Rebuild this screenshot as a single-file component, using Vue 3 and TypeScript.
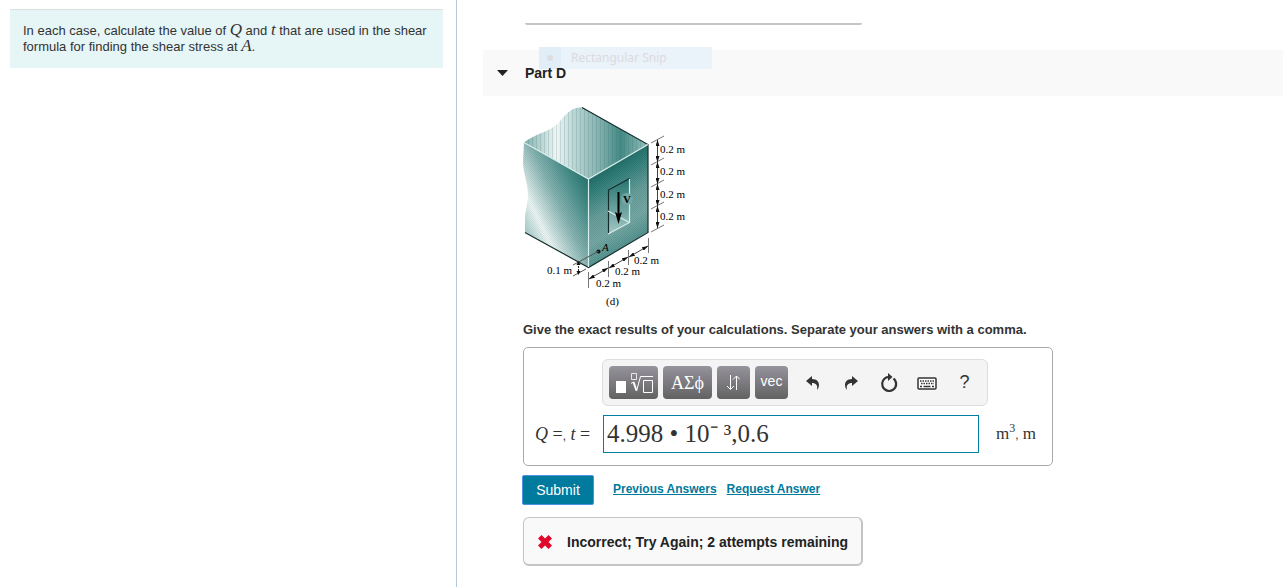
<script setup lang="ts">
import { ref } from 'vue'

const answer = ref('4.998 • 10⁻ ³,0.6')
const expanded = ref(true)
const heights = [153, 175, 198, 220]
const ticks = [143, 165, 187, 209, 232]
</script>

<template>
  <div class="page">
    <aside class="side">
      <p class="statement">
        In each case, calculate the value of <i>Q</i> and <i>t</i> that are used in the shear formula for finding the shear stress at <i>A</i>.
      </p>
    </aside>
    <main class="main">
      <div class="previous"></div>
      <header class="part-head">
        <button class="part-toggle" type="button" :aria-expanded="expanded" @click="expanded = !expanded">
          <svg width="11" height="6" viewBox="0 0 11 6" aria-hidden="true"><path d="M0 0h11L5.500 6z" fill="#222" /></svg>
          <span>Part D</span>
        </button>
        <div class="snip"><span class="snip-mark"><span class="dot"></span></span><span>Rectangular Snip</span></div>
      </header>

      <section v-show="expanded" class="body">
        <svg class="figure" width="166" height="206" viewBox="523 106 166 206" role="img" aria-label="Rectangular member with opening, figure d">
          <defs>
            <linearGradient id="top" gradientUnits="userSpaceOnUse" x1="524" y1="140" x2="648" y2="140">
              <stop offset="0" stop-color="#7fadab" />
              <stop offset=".12" stop-color="#b2cfcd" />
              <stop offset=".26" stop-color="#eff5f5" />
              <stop offset=".4" stop-color="#bed7d6" />
              <stop offset=".6" stop-color="#86b2b0" />
              <stop offset=".78" stop-color="#448985" />
              <stop offset="1" stop-color="#97c0be" />
            </linearGradient>
            <linearGradient id="left" gradientUnits="userSpaceOnUse" x1="519" y1="219" x2="589" y2="185">
              <stop offset="0" stop-color="#a9cbc9" />
              <stop offset=".22" stop-color="#eef6f5" />
              <stop offset=".34" stop-color="#c4dbda" />
              <stop offset=".54" stop-color="#86b2b0" />
              <stop offset=".8" stop-color="#4c8f8b" />
              <stop offset="1" stop-color="#2b7570" />
            </linearGradient>
            <linearGradient id="right" gradientUnits="userSpaceOnUse" x1="590" y1="181" x2="635" y2="252">
              <stop offset="0" stop-color="#25706b" />
              <stop offset=".12" stop-color="#34807b" />
              <stop offset=".4" stop-color="#6a9f9c" />
              <stop offset=".65" stop-color="#79aaa7" />
              <stop offset="1" stop-color="#468985" />
            </linearGradient>
            <linearGradient id="hole" x1="0" y1="0" x2="0" y2="1">
              <stop offset="0" stop-color="#26736e" />
              <stop offset="1" stop-color="#a3c8c6" />
            </linearGradient>
            <pattern id="stripes" width="4" height="4" patternUnits="userSpaceOnUse">
              <path d="M.5 0v4" stroke="#2d6d69" stroke-opacity=".18" />
            </pattern>
            <pattern id="weave" width="2" height="2" patternUnits="userSpaceOnUse">
              <path d="M0 0h1v1H0zM1 1h1v1H1z" fill="#12524e" fill-opacity=".16" />
            </pattern>
            <marker id="tip" viewBox="0 0 6 4" refX="6" refY="2" markerWidth="6" markerHeight="4" markerUnits="userSpaceOnUse" orient="auto-start-reverse">
              <path d="M0 0l6 2-6 2z" fill="#111" />
            </marker>
          </defs>
          <path d="M524 142.500C532 136 543 133 550 129C559 125 562 117 570 111Q575 107 582 107.500L648 144.500L588.500 179Z" fill="url(#top)" />
          <path d="M524 142.500C532 136 543 133 550 129C559 125 562 117 570 111Q575 107 582 107.500L648 144.500L588.500 179Z" fill="url(#stripes)" />
          <path d="M524 142.500L588.500 179V267.500L525 232V219C525 212 528 204 528 195C528 183 523 173 523 162Z" fill="url(#left)" />
          <path d="M524 142.500L588.500 179V267.500L525 232V219C525 212 528 204 528 195C528 183 523 173 523 162Z" fill="url(#weave)" fill-opacity=".5" />
          <path d="M588.500 179L648 144.500V232L588.500 267.500Z" fill="url(#right)" />
          <path d="M588.500 179L648 144.500V232L588.500 267.500Z" fill="url(#weave)" />
          <path d="M608 190L629.500 178.500V222.500L608 234Z" fill="url(#hole)" />
          <path d="M582 107.500L648 144.500V232.500L588.500 267.500L525 232.500M608.500 234V190L629.500 178.500" fill="none" stroke="#142d2c" stroke-width="1.200" />
          <path d="M524 142.500L588.500 179L648 144.500M588.500 179V267M608 234L629.500 222.500V179M608 211L629.500 222.500" fill="none" stroke="#d9eeec" stroke-width="1.200" />
          <circle cx="627" cy="199" r="6" fill="#72a7a4" />
          <path d="M618.500 192V215" stroke="#000" stroke-width="2" />
          <path d="M615 212L618.500 214L622 212L618.500 224Z" fill="#000" />
          <circle cx="598.500" cy="251.500" r="2" fill="#111" />
          <path d="M573 265L599 251M573 276L586 269" stroke="#555" />
          <path d="M578.500 263V273" stroke="#222" stroke-dasharray="2 1" />
          <path d="M576.500 265L578.500 261L580.500 265ZM576.500 271L578.500 275L580.500 271Z" fill="#111" />
          <g stroke="#777">
            <path v-for="y in ticks" :key="y" :d="`M651 ${y}L664 ${y - 7}`" />
            <path d="M588.500 272V288M608.500 261V277M628.500 250V265M648.500 238V253" />
          </g>
          <g stroke="#444">
            <path v-for="y in ticks.slice(0, 4)" :key="y" :d="`M657.500 ${y - 3}V${y + 19}`" marker-start="url(#tip)" marker-end="url(#tip)" />
            <path d="M589 279L608 268" marker-start="url(#tip)" marker-end="url(#tip)" />
            <path d="M609 268L628 257" marker-start="url(#tip)" marker-end="url(#tip)" />
            <path d="M629 257L648 246" marker-start="url(#tip)" marker-end="url(#tip)" />
          </g>
          <g class="figure-text">
            <text v-for="y in heights" :key="y" x="660" :y="y">0.2 m</text>
            <text x="547" y="274">0.1 m</text>
            <text x="596" y="287">0.2 m</text>
            <text x="615" y="275">0.2 m</text>
            <text x="634" y="264">0.2 m</text>
            <text x="606" y="305">(d)</text>
            <text x="602" y="251" font-style="italic">A</text>
            <text x="623" y="203" font-weight="bold">V</text>
          </g>
        </svg>

        <p class="instruction">Give the exact results of your calculations. Separate your answers with a comma.</p>

        <form class="entry" @submit.prevent>
          <div class="answer-box">
            <div class="toolbar">
              <button class="key wide" type="button" aria-label="Templates">
                <svg width="38" height="22" viewBox="0 0 38 22" fill="none" stroke="#fff"><path d="M1 9h10v12H1z" fill="#fff" stroke="none" /><path d="M16.500 1.500h5v6h-5z" stroke-opacity=".8" /><path d="M16 11.500L18.500 10" /><path d="M18.500 10L21.500 18.500" stroke-width="2" /><path d="M21.500 19L25.500 4.500H38M28.500 8.500h9v12h-9z" /></svg>
              </button>
              <button class="key wide greek" type="button">ΑΣϕ</button>
              <button class="key" type="button" aria-label="Arrows">
                <svg width="13" height="16" viewBox="0 0 13 16" fill="none" stroke="#fff"><path d="M3.500 0v14M0 11l3.500 3.500L7 11M9.500 15V1M6 4.500L9.500 1L13 4.500" /></svg>
              </button>
              <button class="key vec" type="button">vec</button>
              <div class="tools">
                <button class="tool" type="button" aria-label="Undo">
                  <svg width="16" height="16" viewBox="0 0 16 16"><path d="M1 6L7 1V4C12 4 14 7 14 10Q14 13 12 15C13 10 11 8 7 8V11Z" fill="#333" /></svg>
                </button>
                <button class="tool" type="button" aria-label="Redo">
                  <svg width="16" height="16" viewBox="0 0 16 16"><path d="M15 6L9 1V4C4 4 2 7 2 10Q2 13 4 15C3 10 5 8 9 8V11Z" fill="#333" /></svg>
                </button>
                <button class="tool" type="button" aria-label="Reset">
                  <svg width="18" height="20" viewBox="0 0 18 20"><path d="M13.500 5.500A7 7 0 1 1 8.500 4" fill="none" stroke="#333" stroke-width="2.200" /><path d="M8 0L12.500 4L8 8Z" fill="#333" /></svg>
                </button>
                <button class="tool" type="button" aria-label="Keyboard">
                  <svg class="keyboard" width="20" height="13" viewBox="0 0 20 13"><rect x="1" y="1" width="18" height="11" rx="1" fill="#fff" stroke="#333" stroke-width="1.500" /><path d="M3 4h14M4 6.500h13" stroke="#333" stroke-width="1.500" stroke-dasharray="1.500 1" /><path d="M3 9.500h2M6.500 9.500h7M15 9.500h2" stroke="#333" stroke-width="1.500" /></svg>
                </button>
                <button class="tool help" type="button" aria-label="Help">?</button>
              </div>
            </div>
            <label class="answer-label" for="answer"><i>Q</i> =<small>,</small> <i>t</i> =</label>
            <input id="answer" v-model="answer" class="answer" type="text" autocomplete="off">
            <span class="units">m<sup>3</sup><small>,</small> m</span>
          </div>
          <div class="actions">
            <button class="submit" type="submit">Submit</button>
            <a href="#previous">Previous Answers</a>
            <a href="#request">Request Answer</a>
          </div>
        </form>

        <div class="feedback" role="status">
          <svg width="14" height="14" viewBox="0 0 14 14" aria-hidden="true"><path d="M3.500 0L7 3.500L10.500 0L14 3.500L10.500 7L14 10.500L10.500 14L7 10.500L3.500 14L0 10.500L3.500 7L0 3.500Z" fill="#e0082c" /></svg>
          <span>Incorrect; Try Again; 2 attempts remaining</span>
        </div>
      </section>
    </main>
  </div>
</template>

<style>
body { margin: 0; background: #fff; }
</style>

<style scoped>
* { box-sizing: border-box; }
.page { display: grid; grid-template-columns: 457px minmax(0, 1fr); min-height: 100vh; overflow: hidden; font: 13px/16px "Liberation Sans", Arial, sans-serif; color: #333; }
button { font: inherit; color: inherit; border: 0; padding: 0; background: none; cursor: pointer; }
.side { padding: 9px 13px 0 10px; border-right: 1px solid #b4c8dc; }
.statement { margin: 0; padding: 13px; background: #e6f5f6; border-top: 1px solid #dcdfdd; }
.statement i { font: italic 17px/0 "Liberation Serif", serif; }
.main { padding-left: 26px; }
.previous { height: 25px; width: 337px; margin: 0 0 25px 42px; border-bottom: 2px solid #c4c4c4; border-radius: 0 0 2px 2px; }
.part-head { position: relative; height: 46px; background: #f9f9f9; padding: 15px 14px; }
.part-toggle { display: flex; align-items: center; gap: 17px; color: #222; font-size: 14px; font-weight: bold; position: relative; z-index: 1; }
.snip { position: absolute; left: 56px; top: -3px; width: 173px; height: 22px; display: flex; gap: 10px; align-items: center; background: #eaf2fa; color: #dcdadf; font: 12px/22px "Noto Sans", "Open Sans", sans-serif; }
.snip-mark { width: 22px; height: 22px; background: #e1eef8; display: grid; place-items: center; }
.dot { width: 6px; height: 6px; border-radius: 50%; background: #dddde1; }
.body { padding: 10px 16px 0 40px; }
.figure { display: block; }
.figure-text { font: 11px "Liberation Serif", serif; fill: #000; }
.instruction { margin: 10px 0 9px; font-size: 13px; font-weight: bold; line-height: 16px; }
.answer-box { width: fit-content; max-width: 100%; display: grid; grid-template-columns: 68px 376px 57px; row-gap: 9px; align-items: center; padding: 11px 16px 12px 11px; border: 1px solid #aaa; border-radius: 5px; }
.toolbar { grid-column: 2 / 4; justify-self: start; display: flex; align-items: center; height: 47px; width: 386px; margin-left: -1px; padding: 0 3px 0 6px; gap: 5px; border: 1px solid #ddd; border-radius: 6px; background: #f4f4f4; }
.key { display: grid; place-items: center; width: 33px; height: 33px; border-radius: 4px; background: linear-gradient(#96939c, #626262); color: #fff; font-size: 14px; }
.wide { width: 49px; }
.greek { font: 18px/24px "Liberation Serif", serif; }
.vec { padding-bottom: 3px; }
.tools { display: flex; gap: 5px; padding-left: 3px; }
.tool { display: grid; place-items: center; width: 33px; height: 33px; color: #333; }
.keyboard { margin-top: 2px; }
.help { font-size: 18px; padding-bottom: 1px; }
.answer-label, .units { font: 18px/20px "Liberation Serif", serif; white-space: nowrap; }
.answer-label small, .units small { font: 12px "Liberation Sans", sans-serif; }
.answer { width: 100%; height: 38px; padding: 0 3px 4px; border: 1px solid #007fa3; border-radius: 0; outline: 0; color: #333; font: 25px/32px "Liberation Serif", serif; }
.units { justify-self: end; font-size: 17px; }
.units sup { font-size: 12px; line-height: 0; }
.actions { display: flex; align-items: center; gap: 10px; margin-top: 9px; }
.submit { width: 72px; height: 30px; margin: 0 9px 0 -1px; border: 1px solid #4b94e0; border-radius: 2px; background: #007a9d; color: #fff; font-size: 14px; }
.actions a { padding-bottom: 2px; color: #007a9c; font-size: 12px; font-weight: bold; text-decoration: underline; }
.feedback { display: flex; align-items: center; gap: 15px; width: fit-content; height: 49px; margin-top: 12px; padding: 1px 13px 0 14px; border: 1px solid #c4c4c4; border-bottom-width: 2px; border-right-width: 2px; border-radius: 6px; background: #f9f9f9; color: #222; font-size: 14px; font-weight: bold; }
</style>
